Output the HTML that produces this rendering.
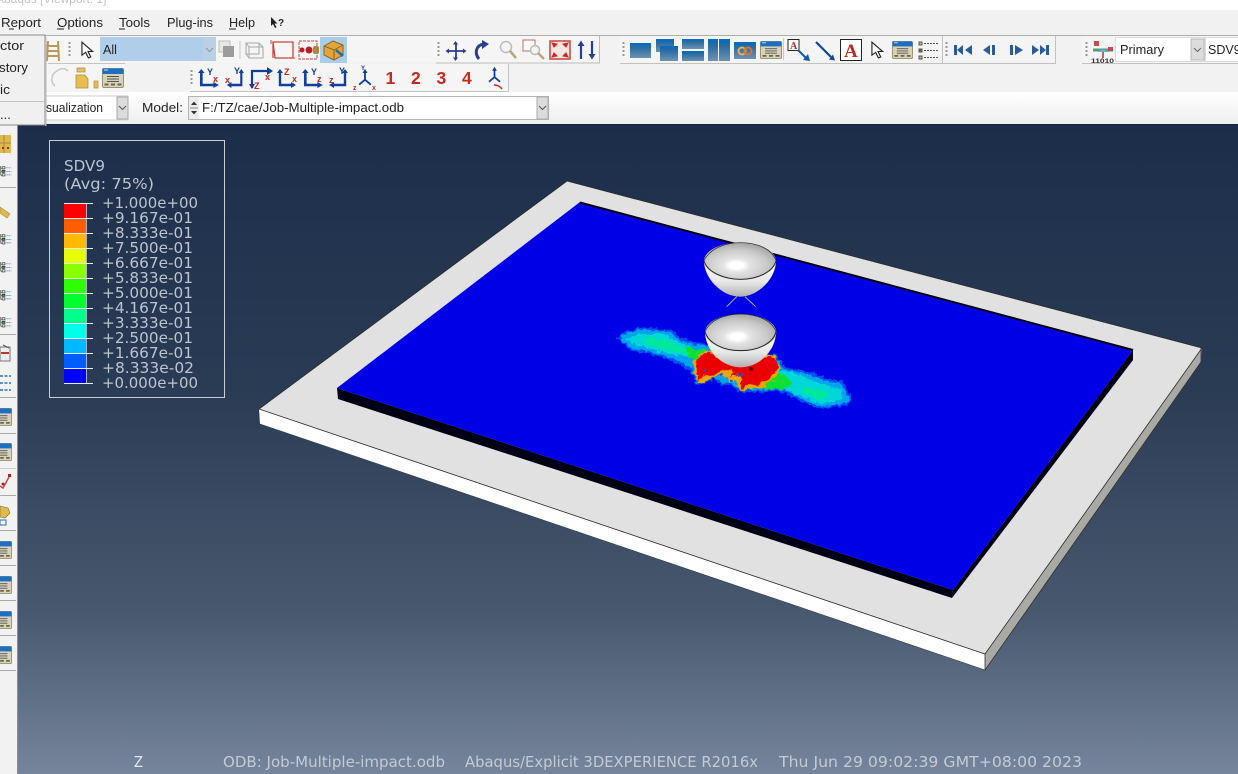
<!DOCTYPE html>
<html><head><meta charset="utf-8"><title>Abaqus Viewport</title>
<style>
html,body{margin:0;padding:0;width:1238px;height:774px;overflow:hidden;background:#f0f0f0}
svg{display:block;position:absolute;left:0;top:0;filter:blur(.3px)}
.m{font:13px "Liberation Sans",sans-serif;fill:#222}
.l{font:15px "DejaVu Sans",sans-serif;fill:#bcc4ce}
.b{font:15px "DejaVu Sans",sans-serif;fill:#c4cad4}
</style></head><body>
<svg width="1238" height="774" viewBox="0 0 1238 774" xmlns="http://www.w3.org/2000/svg">
<defs>
<linearGradient id="bg" x1="0" y1="0" x2="0" y2="1">
<stop offset="0" stop-color="#1b2d49"/><stop offset=".42" stop-color="#2b3d55"/><stop offset=".75" stop-color="#48586f"/><stop offset="1" stop-color="#76859b"/></linearGradient>
<linearGradient id="r3" x1="0" y1="0" x2="0" y2="1"><stop offset="0" stop-color="#fff"/><stop offset="1" stop-color="#eee"/></linearGradient>
<linearGradient id="win" x1="0" y1="0" x2="0" y2="1"><stop offset="0" stop-color="#0f6fb8"/><stop offset=".3" stop-color="#2a6b9f"/><stop offset="1" stop-color="#6d93b5"/></linearGradient>
<linearGradient id="sph" x1="0" y1="0" x2="0" y2="1"><stop offset="0" stop-color="#fff"/><stop offset=".6" stop-color="#e6e6e6"/><stop offset="1" stop-color="#b0b0b0"/></linearGradient>
<radialGradient id="ins" cx=".45" cy=".62" r=".62"><stop offset="0" stop-color="#fff"/><stop offset=".15" stop-color="#fff"/><stop offset=".3" stop-color="#e4e4e4"/><stop offset=".7" stop-color="#c8c8c8"/><stop offset="1" stop-color="#a4a4a4"/></radialGradient>
<filter id="jag" x="-5%" y="-10%" width="110%" height="120%"><feTurbulence type="fractalNoise" baseFrequency=".07" numOctaves="2" seed="4"/><feDisplacementMap in="SourceGraphic" scale="20" xChannelSelector="R" yChannelSelector="G"/></filter>
<symbol id="tb" viewBox="0 0 22 20" preserveAspectRatio="none"><rect x=".5" y=".5" width="21" height="19" rx="1.5" fill="#d8d2b8" stroke="#9a9170"/><rect x=".5" y=".5" width="21" height="5.5" fill="#1d6fc0"/><rect x="2" y="1.5" width="4" height="1" fill="#cde"/><path d="M5 8.5h12M5 11h12M5 13.500h12" stroke="#555" stroke-width="1"/><path d="M2.500 16.500h4M9 16.500h4M15.500 16.500h4" stroke="#6b664c" stroke-width="2"/></symbol>
<symbol id="tree" viewBox="0 0 17 18"><path d="M1 2v13M1 5h3M1 10h3M1 15h3" stroke="#555" fill="none"/><rect x="3" y="3" width="4" height="3" fill="#fff" stroke="#333"/><rect x="3" y="8" width="4" height="3" fill="#3a9a4a" stroke="#333"/><rect x="3" y="13" width="4" height="3" fill="#fff" stroke="#333"/><path d="M9 4.500h7M9 9.500h7M9 14.500h7" stroke="#2a6fb8" stroke-dasharray="2 1"/></symbol>
<symbol id="win1" viewBox="0 0 22 16" preserveAspectRatio="none"><rect width="22" height="16" fill="url(#win)"/><rect width="22" height="3" fill="#0b6cbb"/></symbol>
<symbol id="ax" viewBox="0 0 20 20" preserveAspectRatio="none"><path d="M3 3v14h13" fill="none" stroke="#123f9a" stroke-width="2.400"/><path d="M0 5l3-4 3 4zM14 14l5 3-5 3z" fill="#123f9a"/></symbol>
<symbol id="curs" viewBox="0 0 14 20"><path d="M1 1v14l4-3 3 6 2.500-1-3-6h5z" fill="#fff" stroke="#222" stroke-width="1.200"/></symbol>
<symbol id="grip" viewBox="0 0 3 18"><path d="M1.500 1v16" stroke="#999" stroke-width="2" stroke-dasharray="2 2"/></symbol>
<symbol id="triad" viewBox="0 0 24 24"><path d="M12 4v10M12 14l-7 6M12 14l7 6" stroke="#123f9a" stroke-width="2.200" fill="none"/><path d="M9 6l3-5 3 5z" fill="#123f9a"/></symbol>
</defs>

<rect width="1238" height="774" fill="#f0f0f0"/>
<rect width="1238" height="10" fill="#fff"/>
<text x="-4" y="3" font-family="Liberation Sans" font-size="12" fill="#c4c4c4">Abaqus [Viewport: 1]</text>
<rect y="10" width="1238" height="25" fill="#f1f1f1"/>

<!-- menu -->
<g class="m">
<text x="1" y="27" textLength="40" lengthAdjust="spacingAndGlyphs">Report</text><path d="M9 29h5" stroke="#222"/>
<text x="57" y="27" textLength="46" lengthAdjust="spacingAndGlyphs">Options</text><path d="M57 29h7" stroke="#222"/>
<text x="119" y="27" textLength="31" lengthAdjust="spacingAndGlyphs">Tools</text><path d="M119 29h6" stroke="#222"/>
<text x="167" y="27" textLength="46" lengthAdjust="spacingAndGlyphs">Plug-ins</text>
<text x="229" y="27" textLength="26" lengthAdjust="spacingAndGlyphs">Help</text><path d="M229 29h7" stroke="#222"/>
</g>
<path d="M271 17v9l2-2 2 4 1.500-.8-2-3.700h3z" fill="#222"/>
<text x="278" y="26" font-family="Liberation Sans" font-size="10" font-weight="bold" fill="#222">?</text>

<!-- rows -->
<rect y="35" width="1238" height="1" fill="#aeaeae"/>
<rect y="36" width="1238" height="56" fill="#f2f2f2"/>
<rect y="92" width="1238" height="32" fill="url(#r3)"/>
<rect x="45" y="36" width="555" height="27" fill="#f5f5f5"/>
<path d="M436 63H599.500V36" fill="none" stroke="#bdbdbd"/>
<rect x="620" y="36" width="435" height="27" fill="#f4f4f4"/>
<path d="M620 63.500H1055.500V36M942.500 36V63" fill="none" stroke="#c2c2c2"/>
<rect x="1082" y="36" width="156" height="27" fill="#f4f4f4"/><path d="M1082 63.500H1238" stroke="#c2c2c2"/>
<path d="M48 63.500H124.500V64M190 91.500H508.500V64" fill="none" stroke="#c4c4c4"/>
<rect x="45" y="64" width="80" height="27" fill="#f5f5f5"/>
<rect x="190" y="64" width="318" height="27" fill="#f5f5f5"/>

<!-- row 1 left -->
<path d="M48 41l-1 20M58 41l1 20M46 46h13M46 51h13M46 56h13" stroke="#b89a58" stroke-width="2" fill="none"/>
<use href="#grip" x="68" y="41" width="3" height="18"/>
<use href="#curs" x="81" y="41" width="13" height="19"/>
<rect x="100" y="37" width="116" height="24" fill="#b0cdea"/>
<rect x="203" y="38" width="13" height="22" fill="#bcd0e4"/><path d="M206 48l3.500 3.500 3.500-3.500" stroke="#8a9aaa" fill="none"/>
<text x="103" y="54" font-family="Liberation Sans" font-size="12.500" fill="#222">All</text>
<rect x="219" y="41" width="11" height="11" fill="#e8e8e8" stroke="#bbb"/><rect x="223" y="46" width="11" height="11" fill="#9c9c9c"/>
<path d="M240 41v18" stroke="#c8c8c8"/>
<g fill="none" stroke="#a8a8a8"><path d="M246 43h13v11h-13zM249 47h14v11h-14zM246 43l3 4M259 43l4 4M246 54l3 4"/></g>
<path d="M273 42h20v16h-18zM273 42v16" fill="none" stroke="#c8433a" stroke-width="1.300"/>
<path d="M271 40v4M291 58h4" fill="none" stroke="#c8433a"/>
<rect x="299" y="41" width="18" height="18" fill="none" stroke="#c8433a" stroke-dasharray="3 1"/>
<circle cx="302" cy="50" r="2.500" fill="#b82020"/><circle cx="309" cy="50" r="3.500" fill="#b82020"/><rect x="313" y="46" width="6" height="8" rx="2" fill="#b08a3a"/>
<rect x="320" y="37" width="27" height="26" fill="#a9cce9"/>
<path d="M324 46l9-5 10 4v10l-9 5-10-5z" fill="#e2a53a" stroke="#8a6420"/><path d="M324 46l10 4 9-5M334 50v10" stroke="#8a6420" fill="none"/><path d="M336 50l7 6" stroke="#1f6aa8" stroke-width="2.500"/>

<!-- row 1 view -->
<use href="#grip" x="437" y="41" width="3" height="18"/>
<g stroke="#2b3f8f" stroke-width="1.800" fill="#2b3f8f"><path d="M456 43v16M448 51h16" fill="none"/><path d="M453 44.500l2.500-3.500 2.500 3.500zM453 57.500l2.500 3.500 2.500-3.500zM449 48.500l-3.500 2.500 3.500 2.500zM463 48.500l3.500 2.500-3.500 2.500z" stroke="none"/></g>
<path d="M479 59c-5-6-3-14 5-15" fill="none" stroke="#2b3f8f" stroke-width="3"/><path d="M482 40l7 4-7 5z" fill="#2b3f8f"/>
<circle cx="506" cy="47" r="5.500" fill="#f4f4f4" stroke="#bbb" stroke-width="1.500"/><path d="M510 51l6 7" stroke="#b8a878" stroke-width="2.500"/>
<path d="M523 40h12v11h-12z" fill="#fff" stroke="#c46a60"/><circle cx="535" cy="50" r="4.500" fill="#f2f2f2" stroke="#bbb" stroke-width="1.500"/><path d="M538 53l6 6" stroke="#b8a878" stroke-width="2.500"/>
<rect x="550" y="41" width="20" height="18" fill="#f6e6e2" stroke="#c8433a" stroke-width="1.500"/>
<path d="M552 43l5 1-3 3zM568 43l-5 1 3 3zM552 57l5-1-3-3zM568 57l-5-1 3-3z" fill="#c8281e" stroke="#c8281e"/>
<path d="M581 59V44M592 41v15" stroke="#2b3f8f" stroke-width="2.200"/><path d="M577.500 46l3.500-5.500 3.500 5.500zM588.500 54l3.500 5.500 3.500-5.500z" fill="#2b3f8f"/>

<!-- row 1 windows -->
<use href="#grip" x="622" y="41" width="3" height="18"/>
<use href="#win1" x="630" y="43" width="21" height="15"/>
<use href="#win1" x="656" y="39" width="18" height="13"/><use href="#win1" x="660" y="46" width="18" height="15"/>
<use href="#win1" x="682" y="39" width="22" height="10"/><use href="#win1" x="682" y="51" width="22" height="10"/>
<use href="#win1" x="708" y="39" width="10" height="22"/><use href="#win1" x="719" y="39" width="11" height="22"/>
<use href="#win1" x="734" y="42" width="22" height="17"/>
<circle cx="742" cy="51" r="3.500" fill="none" stroke="#e8b050" stroke-width="2"/><circle cx="748" cy="51" r="3.500" fill="none" stroke="#e07030" stroke-width="2"/>
<use href="#tb" x="760" y="41" width="22" height="18"/>
<path d="M783.500 38v22" stroke="#c8c8c8"/>
<rect x="788" y="39.500" width="11" height="11" fill="#fff" stroke="#222"/><text x="790" y="49" font-family="Liberation Serif" font-size="10" font-weight="bold" fill="#b8281e">A</text>
<path d="M798 50l8 8" stroke="#1558a8" stroke-width="2"/><path d="M803 60l7 1-2-7z" fill="#1558a8"/>
<path d="M816 42l15 15" stroke="#17459a" stroke-width="2.200"/><path d="M829 59.500l6 1-2-6z" fill="#17459a"/>
<rect x="840.500" y="39.500" width="21" height="21" fill="#fff" stroke="#222"/><text x="844" y="57" font-family="Liberation Serif" font-size="19" font-weight="bold" fill="#b8281e">A</text>
<use href="#curs" x="871" y="41" width="13" height="19"/>
<use href="#tb" x="892" y="41" width="21" height="18"/>
<g fill="none" stroke="#555"><rect x="919" y="42" width="3" height="3" fill="#c8b878"/><rect x="919" y="49" width="3" height="3" fill="#6a6a3a"/><rect x="919" y="56" width="3" height="3" fill="#c8b878"/><path d="M924 43.500h15M924 50.500h15M924 57.500h15" stroke-dasharray="2 1"/></g>
<use href="#grip" x="945" y="41" width="3" height="18"/>
<g fill="#2a5c9a">
<path d="M954 45h3v10h-3zM963 45v10l-6-5zM972 45v10l-7-5z"/>
<path d="M990 45v10l-7-5zM992 45h3v10h-3z"/>
<path d="M1010 45h3v10h-3zM1015 45v10l8-5z"/>
<path d="M1032 45v10l7-5zM1040 45v10l6-5zM1046 45h3v10h-3z"/>
</g>

<!-- row 1 right -->
<use href="#grip" x="1085" y="41" width="3" height="18"/>
<rect x="1094" y="41" width="5" height="5" fill="#c84a4a"/><path d="M1093 50h20" stroke="#5a9a7a" stroke-width="3"/><rect x="1108" y="47" width="5" height="4" fill="#c84a4a"/><path d="M1098 52q5-5 11 0" fill="#5ab4d8"/><path d="M1103 52v6" stroke="#c8281e" stroke-width="1.500"/>
<text x="1091" y="63" font-family="Liberation Sans" font-size="6" font-weight="bold" fill="#333" textLength="23" lengthAdjust="spacingAndGlyphs">11010</text>
<rect x="1115.500" y="37.500" width="89" height="24" fill="#fff" stroke="#dcdcdc"/>
<rect x="1191" y="39" width="13" height="21" fill="#dcdcdc" stroke="#b8b8b8"/><path d="M1194 48l3.500 3.500 3.500-3.500" stroke="#666" fill="none"/>
<text x="1120" y="54" font-family="Liberation Sans" font-size="12.500" fill="#222" textLength="44" lengthAdjust="spacingAndGlyphs">Primary</text>
<rect x="1205.500" y="37.500" width="34" height="24" fill="#fff" stroke="#dcdcdc"/>
<text x="1208" y="54" font-family="Liberation Sans" font-size="12.500" fill="#222">SDV9</text>

<!-- row 2 -->
<path d="M55 86a9 9 0 0 1 2-15 8 8 0 0 1 11 0" fill="none" stroke="#c8c8c8" stroke-width="1.500"/>
<rect x="77" y="68" width="8" height="4" fill="#e4c068" stroke="#a88a40" stroke-width=".7"/>
<path d="M76 75h9l3 4v9H76z" fill="#e8bc50" stroke="#a88a40" stroke-width=".7"/>
<rect x="94" y="81" width="4" height="7" fill="#e8bc50" stroke="#a88a40" stroke-width=".7"/>
<use href="#tb" x="102" y="68" width="22" height="20"/>
<use href="#grip" x="190" y="69" width="3" height="18"/>
<g font-family="Liberation Sans" font-weight="bold" font-size="9" fill="#c8281e">
<use href="#ax" x="198" y="68" width="22" height="20"/>
<text x="207" y="75" fill="#123f9a">Y</text><text x="213" y="82">x</text>
<g transform="translate(470,0) scale(-1,1)"><use href="#ax" x="226" y="68" width="18" height="20"/></g>
<text x="225" y="83">x</text><text x="234" y="74" fill="#123f9a">Y</text>
<path d="M252 88V71h17" fill="none" stroke="#123f9a" stroke-width="2.200"/><path d="M249 84l3 5 3-5zM267 67l6 4-6 4z" fill="#123f9a"/>
<text x="254" y="89">Z</text><text x="265" y="80" fill="#c8281e">x</text>
<use href="#ax" x="277" y="68" width="20" height="20"/><text x="284" y="75">Z</text><text x="292" y="82">x</text>
<use href="#ax" x="302" y="68" width="22" height="20"/><text x="311" y="75" fill="#123f9a">Y</text><text x="317" y="82">z</text>
<g transform="translate(676,0) scale(-1,1)"><use href="#ax" x="328" y="68" width="20" height="20"/></g>
<text x="329" y="83">z</text><text x="339" y="74" fill="#123f9a">Y</text>
</g>
<use href="#triad" x="355" y="68" width="20" height="20"/>
<text x="361" y="70" font-family="Liberation Sans" font-weight="bold" font-size="6" fill="#123f9a">Y</text>
<text x="353" y="90" font-family="Liberation Sans" font-weight="bold" font-size="7" fill="#c8281e">z</text>
<text x="372" y="90" font-family="Liberation Sans" font-weight="bold" font-size="7" fill="#c8281e">x</text>
<g font-family="Liberation Sans" font-weight="bold" font-size="17.500" fill="#c8281e">
<text x="385.500" y="84">1</text><text x="411" y="84">2</text><text x="436.500" y="84">3</text><text x="462" y="84">4</text></g>
<use href="#triad" x="485" y="66" width="19" height="19"/>
<path d="M494 85q5 0 8 4" stroke="#c8281e" stroke-width="1.500" fill="none"/>

<!-- row 3 -->
<rect x="45" y="96" width="83" height="24" fill="#fff" stroke="#d0d0d0"/>
<rect x="117" y="97" width="11" height="22" fill="#dcdcdc" stroke="#aaa"/><path d="M119 106l3.500 3.500 3.500-3.500" stroke="#555" fill="none"/>
<text x="46" y="112" font-family="Liberation Sans" font-size="13" fill="#222" textLength="57" lengthAdjust="spacingAndGlyphs">sualization</text>
<text x="142" y="112" font-family="Liberation Sans" font-size="13" fill="#222" textLength="41" lengthAdjust="spacingAndGlyphs">Model:</text>
<rect x="188.500" y="96.500" width="360" height="23" fill="#fff" stroke="#b4b4b4"/>
<rect x="189" y="97" width="10" height="22" fill="#ececec"/><path d="M191 105l3-3.500 3 3.500zM191 111l3 3.500 3-3.500z" fill="#333"/><path d="M190 108h8" stroke="#888"/>
<rect x="537" y="97" width="11" height="22" fill="#dcdcdc" stroke="#aaa"/><path d="M539 106l3.500 3.500 3.500-3.500" stroke="#555" fill="none"/>
<text x="202" y="112" font-family="Liberation Sans" font-size="13" fill="#222" textLength="202" lengthAdjust="spacingAndGlyphs">F:/TZ/cae/Job-Multiple-impact.odb</text>

<!-- viewport -->
<rect x="18" y="125" width="1220" height="649" fill="url(#bg)"/>
<rect x="17" y="125" width="1" height="649" fill="#8a8f96"/>
<rect y="124" width="1238" height="1" fill="#14243c"/>

<!-- left toolbar -->
<rect y="125" width="17" height="649" fill="#f2f2f2"/>
<g>
<path d="M0 135h11v18H0z" fill="#e0b84c"/><path d="M0 143h11M4 135v18" stroke="#a88a40"/><path d="M2 148h2M7 148h2" stroke="#a03040" stroke-width="2"/>
<use href="#tree" x="0" y="162" width="12" height="18"/>
<path d="M0 187.500h16" stroke="#aaa"/>
<path d="M0 207l10 7-3 4-7-5z" fill="#e0b84c" stroke="#a88a40" stroke-width=".6"/>
<use href="#tree" x="0" y="230" width="12" height="18"/>
<use href="#tree" x="0" y="258" width="12" height="18"/>
<use href="#tree" x="0" y="286" width="12" height="18"/>
<use href="#tree" x="0" y="313" width="12" height="18"/>
<path d="M0 334.500h16M0 397.500h16" stroke="#aaa"/>
<rect x="0" y="347" width="10" height="14" fill="#eee" stroke="#777"/><path d="M1 353h8" stroke="#b83a2a" stroke-width="2"/><path d="M3 345l6 3" stroke="#555"/>
<g stroke="#2a6fb8" stroke-width="1.500" stroke-dasharray="3 1.500"><path d="M0 376h11M0 383h11M0 390h11"/></g>
<use href="#tb" x="-8" y="408" width="20" height="18"/><path d="M0 433.500h16" stroke="#aaa"/>
<use href="#tb" x="-8" y="443" width="20" height="18"/><path d="M0 468.500h16" stroke="#ccc"/>
<path d="M0 486l3 2 6-11" stroke="#c84a4a" stroke-width="1.500" fill="none"/><circle cx="3" cy="484" r="1.500" fill="#b82020"/><rect x="8" y="474" width="3" height="3" fill="#b82020"/><path d="M0 495.500h16" stroke="#aaa"/>
<path d="M0 506l8 2 2 5-5 5-5-1z" fill="#e0b84c" stroke="#8a6a20" stroke-width=".6"/><rect x="0" y="520" width="6" height="5" fill="none" stroke="#2a6fb8"/><path d="M0 530.500h16" stroke="#aaa"/>
<use href="#tb" x="-8" y="541" width="20" height="18"/><path d="M0 565.500h16" stroke="#aaa"/>
<use href="#tb" x="-8" y="576" width="20" height="18"/><path d="M0 600.500h16" stroke="#aaa"/>
<use href="#tb" x="-8" y="611" width="20" height="18"/><path d="M0 635.500h16" stroke="#aaa"/>
<use href="#tb" x="-8" y="646" width="20" height="18"/><path d="M0 670.500h16" stroke="#aaa"/>
</g>

<!-- legend -->
<rect x="49.500" y="140.500" width="175" height="257" fill="none" stroke="#c9ced6"/>
<text class="l" x="64" y="171" textLength="41" lengthAdjust="spacingAndGlyphs">SDV9</text>
<text class="l" x="64" y="189" textLength="90" lengthAdjust="spacingAndGlyphs">(Avg: 75%)</text>
<g>
<rect x="64" y="204" width="22" height="15" fill="#f00"/>
<rect x="64" y="219" width="22" height="15" fill="#ff5d00"/>
<rect x="64" y="234" width="22" height="15" fill="#ffb900"/>
<rect x="64" y="249" width="22" height="15" fill="#e8ff00"/>
<rect x="64" y="264" width="22" height="15" fill="#8bff00"/>
<rect x="64" y="279" width="22" height="15" fill="#2eff00"/>
<rect x="64" y="294" width="22" height="15" fill="#00ff2e"/>
<rect x="64" y="309" width="22" height="15" fill="#00ff8b"/>
<rect x="64" y="324" width="22" height="15" fill="#00ffe8"/>
<rect x="64" y="339" width="22" height="15" fill="#00b9ff"/>
<rect x="64" y="354" width="22" height="15" fill="#005dff"/>
<rect x="64" y="369" width="22" height="15" fill="#0000ff"/>
<path d="M86.500 204v180" stroke="#a8b4d0"/>
<path d="M64 203.500h29M64 218.500h29M64 233.500h29M64 248.500h29M64 263.500h29M64 278.500h29M64 293.500h29M64 308.500h29M64 323.500h29M64 338.500h29M64 353.500h29M64 368.500h29M64 383.500h29" stroke="#e8ecf0"/>
</g>
<g class="l">
<text x="102" y="208" textLength="96" lengthAdjust="spacingAndGlyphs">+1.000e+00</text>
<text x="102" y="223" textLength="91" lengthAdjust="spacingAndGlyphs">+9.167e-01</text>
<text x="102" y="238" textLength="91" lengthAdjust="spacingAndGlyphs">+8.333e-01</text>
<text x="102" y="253" textLength="91" lengthAdjust="spacingAndGlyphs">+7.500e-01</text>
<text x="102" y="268" textLength="91" lengthAdjust="spacingAndGlyphs">+6.667e-01</text>
<text x="102" y="283" textLength="91" lengthAdjust="spacingAndGlyphs">+5.833e-01</text>
<text x="102" y="298" textLength="91" lengthAdjust="spacingAndGlyphs">+5.000e-01</text>
<text x="102" y="313" textLength="91" lengthAdjust="spacingAndGlyphs">+4.167e-01</text>
<text x="102" y="328" textLength="91" lengthAdjust="spacingAndGlyphs">+3.333e-01</text>
<text x="102" y="343" textLength="91" lengthAdjust="spacingAndGlyphs">+2.500e-01</text>
<text x="102" y="358" textLength="91" lengthAdjust="spacingAndGlyphs">+1.667e-01</text>
<text x="102" y="373" textLength="92" lengthAdjust="spacingAndGlyphs">+8.333e-02</text>
<text x="102" y="388" textLength="96" lengthAdjust="spacingAndGlyphs">+0.000e+00</text>
</g>

<!-- plate -->
<polygon points="259,409 985,654 985,670 260,424" fill="#fff"/>
<polygon points="985,654 1202,348 1201,362 985,670" fill="#a9a9a5"/>
<polygon points="567,181 1202,348 985,654 259,409" fill="#e1e1e1"/>
<path d="M567 181L1202 348L985 654L259 409Z" fill="none" stroke="#2a2a2a" stroke-width=".8"/>
<path d="M985 654v16L1201 362v-14" fill="none" stroke="#333" stroke-width=".8"/>
<path d="M260 424L985 670" stroke="#2a3a50" stroke-width=".6"/>
<!-- specimen -->
<polygon points="337,388 953,590 952,598 338,399" fill="#000014"/>
<polygon points="953,590 1133,350 1133,360 952,598" fill="#000014"/>
<polygon points="580,202 1133,350 953,590 337,388" fill="#0000e6"/>
<path d="M580 202.500L1133 350" stroke="#000014" stroke-width="2"/>

<!-- contour -->
<g transform="translate(610,230) scale(.33333)">
<g filter="url(#jag)" transform="translate(-8,-8)">
<polygon fill="#0050f0" points="28,335 42,315 80,303 130,300 195,308 220,332 255,345 300,350 320,365 420,395 500,375 535,420 595,430 665,455 705,460 735,510 718,535 640,545 590,525 530,495 470,495 395,495 370,470 340,475 320,455 270,475 250,430 195,400 130,380 72,370"/>
<polygon fill="#00a4ee" points="36,335 48,320 82,310 130,307 190,314 215,337 250,350 300,357 320,372 420,400 500,382 530,427 590,437 660,462 698,467 728,510 713,528 640,538 590,518 530,488 470,488 395,488 370,463 340,468 320,448 270,468 255,423 200,393 130,373 75,363"/>
<polygon fill="#00d8d8" points="58,338 95,320 170,320 212,344 250,358 262,392 200,382 130,365 85,352"/>
<polygon fill="#00d8d8" points="510,425 580,445 650,472 705,488 705,515 640,530 590,510 530,485"/>
<polygon fill="#00e89a" points="100,338 130,330 175,335 215,358 250,368 255,385 195,372 130,355"/>
<polygon fill="#00e89a" points="580,480 620,485 665,495 665,510 630,516 595,500"/>
<polygon fill="#10e030" points="235,360 295,368 280,410 245,395"/>
<polygon fill="#10e030" points="505,425 545,452 552,476 510,486 470,484"/>
<polygon fill="#e8a800" points="258,398 298,368 345,392 500,380 518,420 505,450 470,480 425,485 402,492 392,482 385,460 365,460 340,440 310,456 275,468 260,435"/>
<polygon fill="#ea0000" points="265,395 300,374 340,397 370,412 415,410 445,402 490,385 510,400 513,420 490,452 450,476 420,468 405,486 397,478 405,450 390,440 370,452 375,425 340,430 310,448 290,443 275,462 267,430"/>
</g>
<path d="M280 420l8 2M330 435l8-4M382 430l6 10M400 430l-6 8M360 452l8 2" stroke="#2050e0" stroke-width="6"/>
<circle cx="423" cy="417" r="6" fill="#600010"/>
<!-- upper bowl -->
<path d="M350 230L380 200M437 230L405 200" stroke="#c8c8d8" stroke-width="2.500"/>
<path d="M282 92C282 145 335 200 390 200S498 145 498 92Z" fill="url(#sph)"/>
<ellipse cx="390" cy="93" rx="108" ry="55" fill="url(#ins)"/>
<path d="M282 92C290 125 340 148 392 148S490 125 498 92" fill="none" stroke="#2a2a2a" stroke-width="3"/>
<path d="M282 92C300 55 345 38 392 38S485 55 498 92" fill="none" stroke="#222" stroke-width="2"/>
<!-- lower bowl -->
<path d="M285 305C285 360 335 412 392 412S498 360 498 305Z" fill="url(#sph)"/>
<ellipse cx="392" cy="307" rx="107" ry="55" fill="url(#ins)"/>
<path d="M285 305C295 340 340 362 392 362S490 340 498 305" fill="none" stroke="#222" stroke-width="3"/>
<path d="M285 305C300 270 345 252 392 252S485 270 498 305" fill="none" stroke="#222" stroke-width="2"/>
</g>

<!-- bottom text -->
<text class="b" x="134" y="767" textLength="9" lengthAdjust="spacingAndGlyphs" style="fill:#e4e8ee">Z</text>
<text class="b" x="223" y="767" textLength="222" lengthAdjust="spacingAndGlyphs">ODB: Job-Multiple-impact.odb</text>
<text class="b" x="465" y="767" textLength="293" lengthAdjust="spacingAndGlyphs">Abaqus/Explicit 3DEXPERIENCE R2016x</text>
<text class="b" x="779" y="767" textLength="303" lengthAdjust="spacingAndGlyphs">Thu Jun 29 09:02:39 GMT+08:00 2023</text>

<!-- popup -->
<rect x="-2" y="35" width="47" height="90" fill="#f0f0f0" stroke="#8a8a8a"/>
<rect x="45" y="37" width="1.500" height="89" fill="#b8b8b8"/>
<path d="M0 101.500h44" stroke="#c4c4c4"/>
<g class="m">
<text x="0" y="50" textLength="24" lengthAdjust="spacingAndGlyphs">ctor</text>
<text x="-1" y="72" textLength="29" lengthAdjust="spacingAndGlyphs">story</text>
<text x="0" y="94" textLength="10" lengthAdjust="spacingAndGlyphs">ic</text>
<text x="0" y="119">...</text>
</g>
</svg>
</body></html>
